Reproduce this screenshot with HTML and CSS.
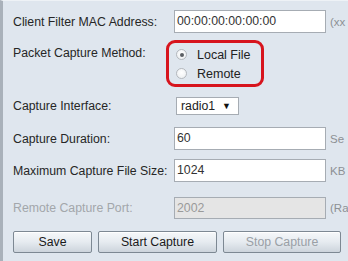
FILE: index.html
```html
<!DOCTYPE html>
<html>
<head>
<meta charset="utf-8">
<link rel="stylesheet" href="styles.css">
</head>
<body>
<div class="page">
  <div class="row r1">
    <div class="label">Client Filter MAC Address:</div>
    <div class="field"><span class="input">00:00:00:00:00:00</span><span class="hint">(xx</span></div>
  </div>
  <div class="row r2">
    <div class="label method-label">Packet Capture Method:</div>
    <div class="field">
      <div class="highlight">
        <div class="radio-row"><span class="radio checked"></span><span class="rlabel">Local File</span></div>
        <div class="radio-row"><span class="radio"></span><span class="rlabel">Remote</span></div>
      </div>
    </div>
  </div>
  <div class="row r3">
    <div class="label">Capture Interface:</div>
    <div class="field"><span class="select">radio1<span class="arrow">▼</span></span></div>
  </div>
  <div class="row r4">
    <div class="label">Capture Duration:</div>
    <div class="field"><span class="input">60</span><span class="hint">Se</span></div>
  </div>
  <div class="row r5">
    <div class="label">Maximum Capture File Size:</div>
    <div class="field"><span class="input">1024</span><span class="hint">KB</span></div>
  </div>
  <div class="row r6">
    <div class="label disabled">Remote Capture Port:</div>
    <div class="field"><span class="input dis">2002</span><span class="hint">(Ra</span></div>
  </div>
  <div class="buttons">
    <span class="btn save">Save</span>
    <span class="btn start">Start Capture</span>
    <span class="btn stop">Stop Capture</span>
  </div>
</div>
</body>
</html>
```
FILE: styles.css
```css
html, body {
  margin: 0;
  padding: 0;
  overflow: hidden;
  width: 348px;
  height: 261px;
}
body {
  background: #dfe6ee;
  font-family: "Liberation Sans", Arial, sans-serif;
  font-size: 12.3px;
  color: #262626;
}
.page {
  box-sizing: border-box;
  height: 261px;
  border-left: 3px solid #a9b1ba;
  border-top: 1px solid #eef2f6;
  padding: 9px 0 0 10px;
  white-space: nowrap;
}
.row {
  display: flex;
  align-items: center;
}
.label {
  width: 161px;
  flex: none;
  line-height: 14px;
}
.label.disabled {
  color: #a3a7ab;
}
.field {
  display: flex;
  align-items: center;
}
.input {
  box-sizing: border-box;
  width: 152px;
  height: 23px;
  background: #fff;
  border: 1px solid #a6acb3;
  padding: 0 2px;
  line-height: 21px;
  color: #333;
  flex: none;
}
.input.dis {
  background: #e5e5e5;
  color: #9a9a9a;
  height: 22px;
  line-height: 20px;
}
.hint {
  margin-left: 4px;
  font-size: 11.5px;
  color: #8d9094;
}
.r1 { height: 23px; }
.r2 { margin-top: 7px; align-items: flex-start; }
.method-label { padding-top: 6px; }
.highlight {
  box-sizing: border-box;
  margin-left: -8px;
  width: 98px;
  height: 47px;
  border: 3px solid #d7141d;
  border-radius: 9px;
  padding: 2px 0 0 7px;
}
.radio-row {
  display: flex;
  align-items: center;
  height: 19px;
}
.radio {
  box-sizing: border-box;
  width: 11px;
  height: 11px;
  border-radius: 50%;
  border: 1px solid #b4b8bd;
  background: radial-gradient(circle at 50% 40%, #ffffff 0%, #e9ecef 100%);
  display: flex;
  align-items: center;
  justify-content: center;
  flex: none;
}
.radio.checked::after {
  content: "";
  width: 4px;
  height: 4px;
  border-radius: 50%;
  background: #5a5e63;
}
.rlabel {
  margin-left: 10px;
  font-size: 12.5px;
  color: #222;
}
.r3 { margin-top: 10px; height: 18px; }
.select {
  box-sizing: border-box;
  margin-left: 2px;
  width: 63px;
  height: 18px;
  background: #fff;
  border: 1px solid #a6acb3;
  padding: 0 0 0 4px;
  line-height: 16px;
  display: flex;
  justify-content: space-between;
  color: #222;
}
.arrow {
  font-size: 9px;
  margin-right: 7px;
  color: #111;
}
.r4 { margin-top: 12px; height: 23px; }
.r5 { margin-top: 9px; height: 23px; }
.r6 { margin-top: 15px; height: 22px; }
.buttons {
  display: flex;
  gap: 6px;
  margin-top: 12px;
}
.btn {
  box-sizing: border-box;
  height: 22px;
  border: 1px solid #7d8893;
  border-radius: 2px;
  background: linear-gradient(#f6f8fa 0%, #e6ebf0 50%, #cdd4dc 100%);
  text-align: center;
  line-height: 20px;
  color: #1a1a1a;
  box-shadow: inset 0 1px 0 #ffffff;
}
.save { width: 79px; }
.start { width: 119px; }
.stop { width: 118px; color: #9aa0a6; }
```
